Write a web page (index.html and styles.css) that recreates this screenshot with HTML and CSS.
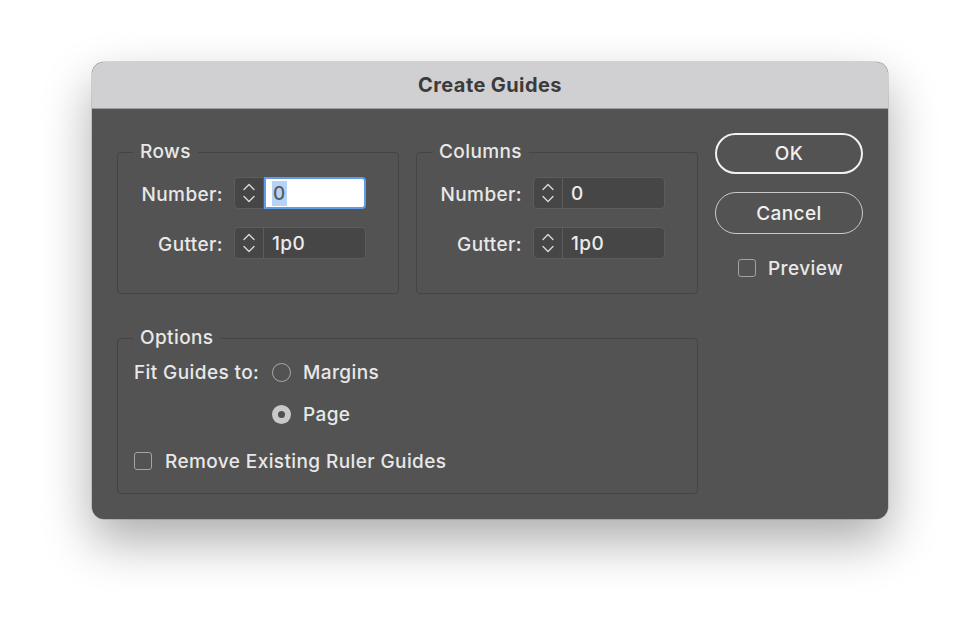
FILE: index.html
```html
<!DOCTYPE html>
<html lang="en">
<head>
<meta charset="utf-8">
<title>Create Guides</title>
<link rel="stylesheet" href="styles.css">
</head>
<body>
<div class="dialog">
  <div class="titlebar">Create Guides</div>
  <div class="body">
    <div class="main">
      <div class="top-groups">
        <fieldset class="group">
          <legend>Rows</legend>
          <div class="fields">
            <span class="lbl">Number:</span>
            <div class="spin active">
              <span class="step"><svg viewBox="0 0 12 24" width="12" height="24"><path d="M1 8.5 L6 3.5 L11 8.5 M1 15.5 L6 20.5 L11 15.5" fill="none" stroke="#d8d8d8" stroke-width="1.4" stroke-linecap="round" stroke-linejoin="round"/></svg></span>
              <span class="val"><span class="sel">0</span></span>
            </div>
            <span class="lbl">Gutter:</span>
            <div class="spin">
              <span class="step"><svg viewBox="0 0 12 24" width="12" height="24"><path d="M1 8.5 L6 3.5 L11 8.5 M1 15.5 L6 20.5 L11 15.5" fill="none" stroke="#d8d8d8" stroke-width="1.4" stroke-linecap="round" stroke-linejoin="round"/></svg></span>
              <span class="val">1p0</span>
            </div>
          </div>
        </fieldset>
        <fieldset class="group">
          <legend>Columns</legend>
          <div class="fields">
            <span class="lbl">Number:</span>
            <div class="spin">
              <span class="step"><svg viewBox="0 0 12 24" width="12" height="24"><path d="M1 8.5 L6 3.5 L11 8.5 M1 15.5 L6 20.5 L11 15.5" fill="none" stroke="#d8d8d8" stroke-width="1.4" stroke-linecap="round" stroke-linejoin="round"/></svg></span>
              <span class="val">0</span>
            </div>
            <span class="lbl">Gutter:</span>
            <div class="spin">
              <span class="step"><svg viewBox="0 0 12 24" width="12" height="24"><path d="M1 8.5 L6 3.5 L11 8.5 M1 15.5 L6 20.5 L11 15.5" fill="none" stroke="#d8d8d8" stroke-width="1.4" stroke-linecap="round" stroke-linejoin="round"/></svg></span>
              <span class="val">1p0</span>
            </div>
          </div>
        </fieldset>
      </div>
      <fieldset class="group options">
        <legend>Options</legend>
        <div class="opt-grid">
          <span class="opt-lbl">Fit Guides to:</span>
          <span class="choice"><span class="radio"></span>Margins</span>
          <span></span>
          <span class="choice"><span class="radio on"></span>Page</span>
        </div>
        <div class="choice remove"><span class="check"></span>Remove Existing Ruler Guides</div>
      </fieldset>
    </div>
    <div class="side">
      <button class="btn ok">OK</button>
      <button class="btn cancel">Cancel</button>
      <div class="choice preview"><span class="check"></span>Preview</div>
    </div>
  </div>
</div>
</body>
</html>
```
FILE: styles.css
```css
html, body {
  margin: 0;
  padding: 0;
  background: #ffffff;
}
body {
  font-family: Inter, "Liberation Sans", sans-serif;
  font-size: 19px;
  font-weight: 500;
  letter-spacing: 0.4px;
  width: 980px;
  height: 641px;
  overflow: hidden;
}
.dialog {
  margin: 62px 0 0 92px;
  width: 796px;
  height: 457px;
  border-radius: 12px;
  background: #535353;
  box-shadow: 0 22px 50px rgba(0, 0, 0, 0.33), 0 0 0 0.5px rgba(0, 0, 0, 0.25);
  overflow: hidden;
  display: flex;
  flex-direction: column;
}
.titlebar {
  height: 46px;
  line-height: 47px;
  background: #d0d0d2;
  border-bottom: 1px solid #9e9e9e;
  text-align: center;
  font-weight: 700;
  font-size: 20px;
  letter-spacing: 0.4px;
  color: #3b3b3b;
}
.body {
  display: flex;
  align-items: flex-start;
  padding: 24px 25px 0 25px;
  color: #e8e8e8;
}
.main {
  width: 581px;
  margin-top: 8px;
}
.top-groups {
  display: flex;
  gap: 17px;
}
.group {
  margin: 0;
  border: 1px solid #444444;
  border-radius: 4px;
  padding: 14px 0 34px 0;
  min-width: 0;
  width: 282px;
  box-sizing: border-box;
}
.group legend {
  margin-left: 15px;
  padding: 0 7px;
  line-height: 22px;
}
.fields {
  display: grid;
  grid-template-columns: 105px 132px;
  column-gap: 11px;
  row-gap: 18px;
  align-items: center;
}
.lbl {
  justify-self: end;
  padding-top: 2px;
}
.spin {
  display: flex;
  height: 32px;
  box-sizing: border-box;
  border: 1px solid #5c5c5c;
  border-radius: 4px;
  background: #464646;
}
.step {
  width: 28px;
  border-right: 1px solid #5c5c5c;
  display: flex;
  align-items: center;
  justify-content: center;
}
.step svg {
  display: block;
}
.val {
  flex: 1;
  padding-left: 8px;
  line-height: 31px;
  color: #ececec;
}
.spin.active .val {
  margin: -1px -1px -1px 0;
  border: 2px solid #5f9be6;
  border-radius: 0 4px 4px 0;
  background: #ffffff;
  color: #5a5a5a;
  line-height: 29px;
  padding-left: 6px;
}
.sel {
  background: #b5d3f7;
  padding: 1px 1px;
}
.group.options {
  width: 581px;
  margin-top: 33px;
  padding: 11px 0 20px 16px;
}
.group.options legend {
  margin-left: -1px;
}
.opt-grid {
  display: grid;
  grid-template-columns: 138px auto;
  row-gap: 18px;
  align-items: center;
}
.choice {
  display: flex;
  align-items: center;
  height: 24px;
}
.radio {
  width: 19px;
  height: 19px;
  box-sizing: border-box;
  border: 1.5px solid #a9a9a9;
  border-radius: 50%;
  margin-right: 12px;
  display: flex;
  align-items: center;
  justify-content: center;
}
.radio.on {
  border: none;
  background: #c9c9c9;
}
.radio.on::after {
  content: "";
  width: 7px;
  height: 7px;
  border-radius: 50%;
  background: #4f4f4f;
}
.check {
  width: 18px;
  height: 18px;
  box-sizing: border-box;
  border: 1.5px solid #a3a3a3;
  border-radius: 3px;
  margin-right: 13px;
}
.remove {
  margin-top: 23px;
}
.side {
  width: 148px;
  margin-left: 17px;
  display: flex;
  flex-direction: column;
}
.btn {
  font-family: inherit;
  font-size: 19px;
  font-weight: 500;
  letter-spacing: 0.4px;
  color: #f0f0f0;
  background: transparent;
  border-radius: 21px;
  padding: 0;
  width: 148px;
}
.btn.ok {
  height: 41px;
  border: 2px solid #f2f2f2;
}
.btn.cancel {
  margin-top: 18px;
  height: 42px;
  border: 1.5px solid #c9c9c9;
}
.preview {
  margin-top: 22px;
  padding-left: 23px;
}
.preview .check {
  margin-right: 12px;
}
```
